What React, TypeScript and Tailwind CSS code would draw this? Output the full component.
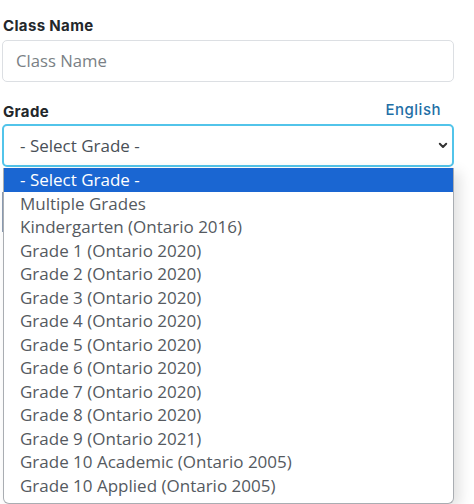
import React from "react";

const options = [
    "Multiple Grades",
    "Kindergarten (Ontario 2016)",
    "Grade 1 (Ontario 2020)",
    "Grade 2 (Ontario 2020)",
    "Grade 3 (Ontario 2020)",
    "Grade 4 (Ontario 2020)",
    "Grade 5 (Ontario 2020)",
    "Grade 6 (Ontario 2020)",
    "Grade 7 (Ontario 2020)",
    "Grade 8 (Ontario 2020)",
    "Grade 9 (Ontario 2021)",
    "Grade 10 Academic (Ontario 2005)",
    "Grade 10 Applied (Ontario 2005)",
];

const App: React.FC = () => {
    return (
        <div className="relative h-[504px] w-[474px] overflow-hidden bg-white font-['Open_Sans',sans-serif]">
            <div className="w-[454px] pl-[2px] pt-[17px]">
                <label className="block pl-[1px] font-['Inter',sans-serif] text-[15px] font-bold leading-[18px] tracking-[0.35px] text-[#23272b]">
                    Class Name
                </label>
                <div className="mt-[5px] flex h-[42px] items-center rounded-[5px] border border-[#dcdfe3] px-[13px] text-[16.7px] text-[#7a7f85]">
                    Class Name
                </div>
                <div className="mt-[19px] flex items-end justify-between pl-[1px] pr-[13px]">
                    <span className="font-['Inter',sans-serif] text-[15px] font-bold leading-[18px] tracking-[0.35px] text-[#23272b]">Grade</span>
                    <span className="mb-[2px] font-['Inter',sans-serif] text-[15px] font-medium leading-[18px] tracking-[0.5px] text-[#1f6fa6]">English</span>
                </div>
                <div className="relative mt-[3px]">
                    <div className="flex h-[43px] items-center justify-between rounded-[5px] border-2 border-[#52c4ea] bg-white pl-[16px] pr-[4px] text-[17px] text-[#495057]">
                        <span>- Select Grade -</span>
                        <svg width="10" height="7" viewBox="0 0 10 7" fill="none">
                            <path d="M1.8 1.8 L5 5 L8.2 1.8" stroke="#333" strokeWidth="2" strokeLinecap="round" strokeLinejoin="round" />
                        </svg>
                    </div>
                    <div className="mt-[25px] h-[40px] border-x border-[#8c9db3] bg-white"></div>
                    <div className="absolute left-[1px] right-0 top-[44px] z-10 overflow-hidden rounded-b-[6px] border border-t-0 border-[#a9adb2] bg-white pb-[6px] text-[17px] leading-[23.5px] text-[#555a5f] shadow-[6px_4px_14px_rgba(0,0,0,0.12)]">
                        <div className="bg-[#1a66d2] pl-[16px] text-white">- Select Grade -</div>
                        {options.map((o) => (
                            <div key={o} className="pl-[16px]">
                                {o}
                            </div>
                        ))}
                    </div>
                </div>
            </div>
        </div>
    );
};

export default App;
